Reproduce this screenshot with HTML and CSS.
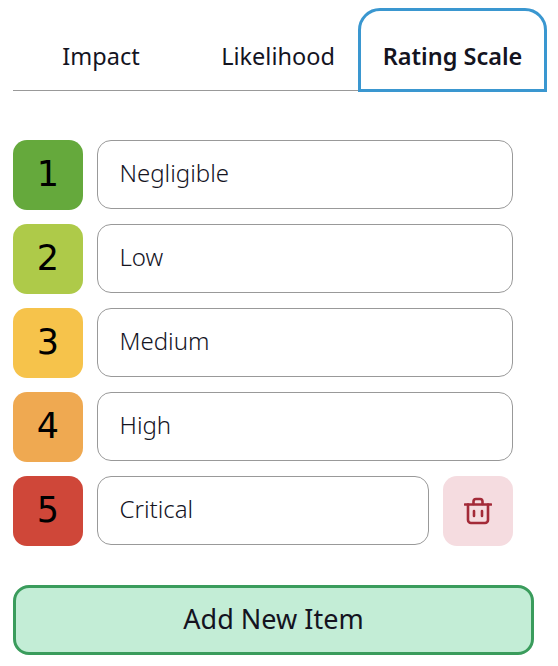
FILE: index.html
```html
<!DOCTYPE html>
<html lang="en">
<head>
  <meta charset="UTF-8">
  <title>Rating Scale</title>
  <link rel="stylesheet" href="styles.css">
</head>
<body>
  <div class="tabs">
    <div class="tab tab-impact">Impact</div>
    <div class="tab tab-likelihood">Likelihood</div>
    <div class="tab tab-active">Rating Scale</div>
  </div>
  <div class="items">
    <div class="item">
      <div class="badge level-1">1</div>
      <div class="field">Negligible</div>
    </div>
    <div class="item">
      <div class="badge level-2">2</div>
      <div class="field">Low</div>
    </div>
    <div class="item">
      <div class="badge level-3">3</div>
      <div class="field">Medium</div>
    </div>
    <div class="item">
      <div class="badge level-4">4</div>
      <div class="field">High</div>
    </div>
    <div class="item">
      <div class="badge level-5">5</div>
      <div class="field">Critical</div>
      <div class="remove">
        <svg width="28" height="28" viewBox="0 0 28 28" fill="none" stroke="#a32a38" stroke-width="2.6" stroke-linecap="round" stroke-linejoin="round">
          <path d="M1 7.5h26"/>
          <path d="M9.5 7V4.5a2.500 2.500 0 0 1 2.500-2.500h4a2.500 2.500 0 0 1 2.500 2.500V7"/>
          <path d="M4 7.500V23a3 3 0 0 0 3 3h14a3 3 0 0 0 3-3V7.500"/>
          <path d="M10 14v5M18 14v5"/>
        </svg>
      </div>
    </div>
  </div>
  <button class="add-btn">Add New Item</button>
</body>
</html>
```

FILE: styles.css
```css
* {
  box-sizing: border-box;
}
body {
  margin: 0;
  padding: 8px 11px 0 13px;
  font-family: "Noto Sans", "Lato", sans-serif;
  color: #14141f;
  background: #fff;
}
.tabs {
  display: flex;
  height: 83px;
  border-bottom: 1px solid #999;
}
.tab {
  padding-top: 32px;
  font-size: 23.5px;
  text-align: center;
}
.tab-impact {
  width: 176px;
}
.tab-likelihood {
  width: 169px;
  padding-left: 9px;
}
.tab-active {
  width: 189px;
  height: 84px;
  padding-top: 29px;
  font-weight: 600;
  border: 3px solid #3a97d0;
  border-radius: 22px 22px 0 0;
}
.items {
  display: flex;
  flex-direction: column;
  gap: 14px;
  width: 500px;
  margin-top: 49px;
}
.item {
  display: flex;
  gap: 14px;
}
.badge {
  flex: none;
  width: 70px;
  height: 70px;
  border-radius: 14px;
  font-family: "DejaVu Sans", sans-serif;
  font-size: 35px;
  line-height: 68px;
  text-align: center;
  color: #000;
}
.level-1 { background: #65a93c; }
.level-2 { background: #aeca49; }
.level-3 { background: #f6c34b; }
.level-4 { background: #efa951; }
.level-5 { background: #cf4739; }
.field {
  flex: 1;
  height: 69px;
  padding-left: 21.5px;
  border: 1px solid #999;
  border-radius: 14px;
  font-size: 24px;
  font-weight: 300;
  line-height: 64px;
}
.remove {
  flex: none;
  display: flex;
  align-items: center;
  justify-content: center;
  width: 70px;
  height: 70px;
  border-radius: 14px;
  background: #f5dce0;
}
.add-btn {
  display: block;
  width: 521px;
  height: 70px;
  margin-top: 39px;
  padding-bottom: 4px;
  border: 3px solid #3a9c5c;
  border-radius: 16px;
  background: #c3edd6;
  color: #14141f;
  font-family: inherit;
  font-size: 27px;
}
```
